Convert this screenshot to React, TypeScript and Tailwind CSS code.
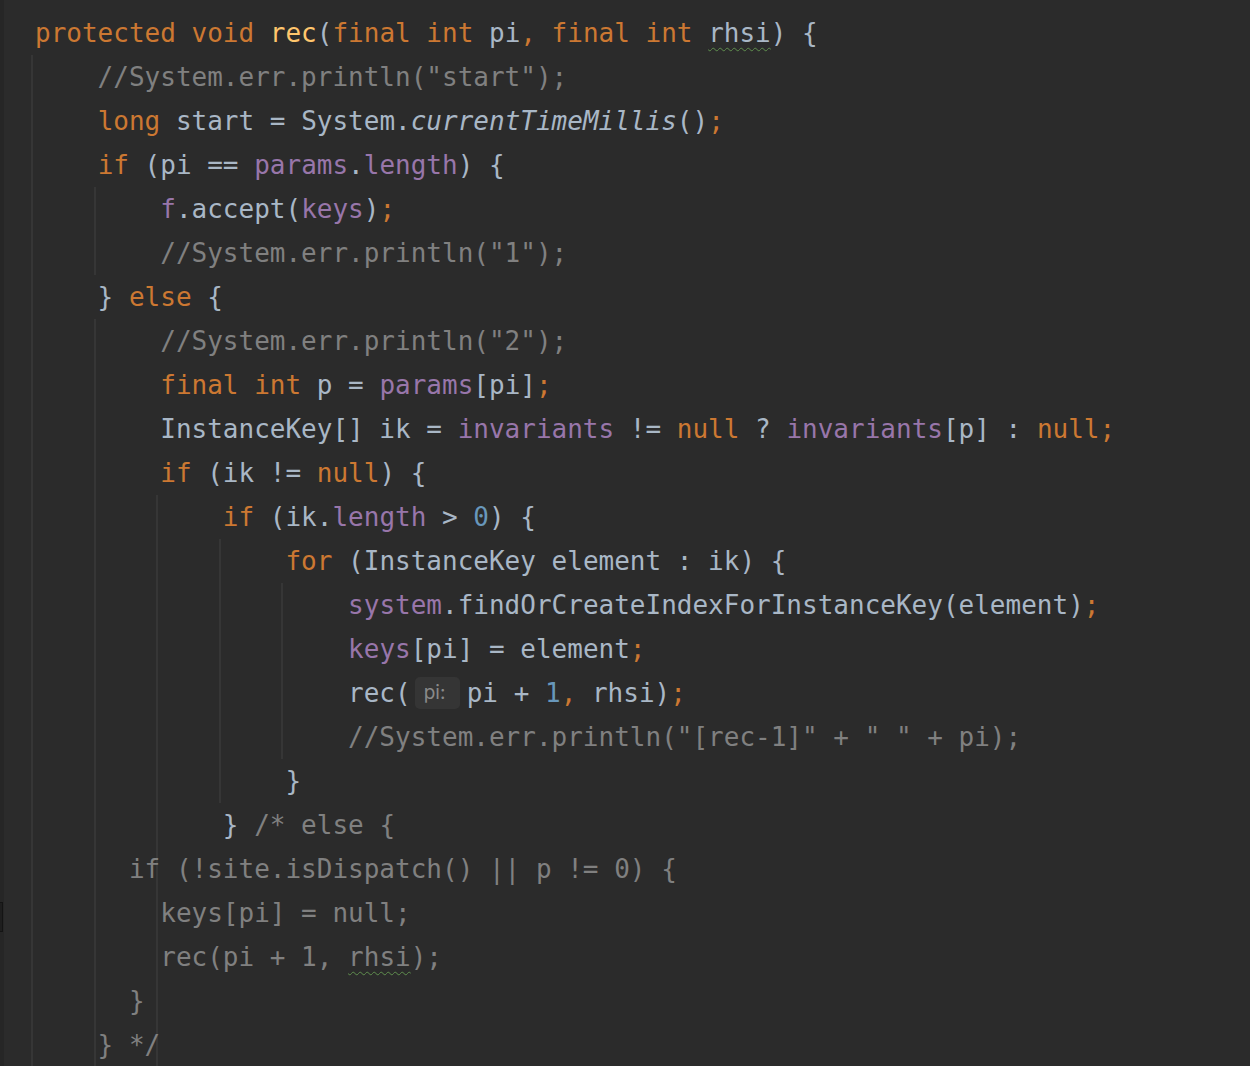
import type { ReactNode } from 'react';

const K = 'text-[#cc7832]';
const T = 'text-[#a9b7c6]';
const F = 'text-[#9876aa]';
const C = 'text-[#808080]';
const N = 'text-[#6897bb]';
const M = 'text-[#ffc66d]';
const I = 'text-[#a9b7c6] italic';
const W = 'text-[#a9b7c6] underline decoration-wavy decoration-[#5f8e4e] underline-offset-[5px] decoration-1';
const WC = 'text-[#808080] underline decoration-wavy decoration-[#5f8e4e] underline-offset-[5px] decoration-1';

type Seg = [string, string] | 'hint';

type Line = { guides: number[]; segs: Seg[] };

function InlayHint() {
  return (
    <span className="inline-block align-middle ml-[4px] mr-[7px] w-[45px] h-[32px] -mt-[4px] rounded-[5px] bg-[#353535] pl-[9px] font-['Inter',sans-serif] text-[19px] leading-[32px] text-[#8a8a8a]">
      pi:
    </span>
  );
}

const lines: Line[] = [
  {
    guides: [],
    segs: [
      ['protected void ', K],
      ['rec', M],
      ['(', T],
      ['final int ', K],
      ['pi', T],
      [', ', K],
      ['final int ', K],
      ['rhsi', W],
      [') {', T],
    ],
  },
  { guides: [0], segs: [['    //System.err.println("start");', C]] },
  {
    guides: [0],
    segs: [
      ['    ', T],
      ['long ', K],
      ['start = System.', T],
      ['currentTimeMillis', I],
      ['()', T],
      [';', K],
    ],
  },
  {
    guides: [0],
    segs: [
      ['    ', T],
      ['if', K],
      [' (pi == ', T],
      ['params', F],
      ['.', T],
      ['length', F],
      [') {', T],
    ],
  },
  {
    guides: [0, 4],
    segs: [
      ['        ', T],
      ['f', F],
      ['.accept(', T],
      ['keys', F],
      [')', T],
      [';', K],
    ],
  },
  { guides: [0, 4], segs: [['        //System.err.println("1");', C]] },
  {
    guides: [0],
    segs: [
      ['    } ', T],
      ['else', K],
      [' {', T],
    ],
  },
  { guides: [0, 4], segs: [['        //System.err.println("2");', C]] },
  {
    guides: [0, 4],
    segs: [
      ['        ', T],
      ['final int ', K],
      ['p = ', T],
      ['params', F],
      ['[pi]', T],
      [';', K],
    ],
  },
  {
    guides: [0, 4],
    segs: [
      ['        InstanceKey[] ik = ', T],
      ['invariants', F],
      [' != ', T],
      ['null', K],
      [' ? ', T],
      ['invariants', F],
      ['[p] : ', T],
      ['null;', K],
    ],
  },
  {
    guides: [0, 4],
    segs: [
      ['        ', T],
      ['if', K],
      [' (ik != ', T],
      ['null', K],
      [') {', T],
    ],
  },
  {
    guides: [0, 4, 8],
    segs: [
      ['            ', T],
      ['if', K],
      [' (ik.', T],
      ['length', F],
      [' > ', T],
      ['0', N],
      [') {', T],
    ],
  },
  {
    guides: [0, 4, 8, 12],
    segs: [
      ['                ', T],
      ['for', K],
      [' (InstanceKey element : ik) {', T],
    ],
  },
  {
    guides: [0, 4, 8, 12, 16],
    segs: [
      ['                    ', T],
      ['system', F],
      ['.findOrCreateIndexForInstanceKey(element)', T],
      [';', K],
    ],
  },
  {
    guides: [0, 4, 8, 12, 16],
    segs: [
      ['                    ', T],
      ['keys', F],
      ['[pi] = element', T],
      [';', K],
    ],
  },
  {
    guides: [0, 4, 8, 12, 16],
    segs: [
      ['                    rec(', T],
      'hint',
      ['pi + ', T],
      ['1', N],
      [', ', K],
      ['rhsi)', T],
      [';', K],
    ],
  },
  {
    guides: [0, 4, 8, 12, 16],
    segs: [['                    //System.err.println("[rec-1]" + " " + pi);', C]],
  },
  { guides: [0, 4, 8, 12], segs: [['                }', T]] },
  {
    guides: [0, 4, 8],
    segs: [
      ['            } ', T],
      ['/* else {', C],
    ],
  },
  { guides: [0, 4, 8], segs: [['      if (!site.isDispatch() || p != 0) {', C]] },
  { guides: [0, 4, 8], segs: [['        keys[pi] = null;', C]] },
  {
    guides: [0, 4, 8],
    segs: [
      ['        rec(pi + 1, ', C],
      ['rhsi', WC],
      [');', C],
    ],
  },
  { guides: [0, 4, 8], segs: [['      }', C]] },
  { guides: [0, 4, 8], segs: [['    } */', C]] },
];

// indent guide offsets, relative to the start of the code column
const guideLeft: Record<number, string> = {
  0: 'left-[-4px]',
  4: 'left-[58.5px]',
  8: 'left-[121px]',
  12: 'left-[183.5px]',
  16: 'left-[246px]',
};

function CodeLine({ line }: { line: Line }) {
  const parts: ReactNode[] = line.segs.map((s, i) =>
    s === 'hint' ? (
      <InlayHint key={i} />
    ) : (
      <span key={i} className={s[1]}>
        {s[0]}
      </span>
    ),
  );
  return (
    <div className="relative h-[44px] whitespace-pre">
      {line.guides.map((g) => (
        <div key={g} className={`absolute top-0 h-full w-[2px] bg-[#363636] ${guideLeft[g]}`} />
      ))}
      <span className="relative">{parts}</span>
    </div>
  );
}

export default function App() {
  return (
    <div className="flex h-[1066px] w-full overflow-hidden bg-[#2b2b2b]">
      <div className="flex w-[4px] shrink-0 flex-col bg-[#262626]">
        <div className="h-[902px]" />
        <div className="h-[30px] w-[3px] border-y border-r border-[#141414] bg-[#1e1e1e]" />
      </div>
      <div className="flex-1 pl-[31px] pt-[11px] font-['DejaVu_Sans_Mono',monospace] text-[26px] leading-[44px] text-[#a9b7c6]">
        {lines.map((line, i) => (
          <CodeLine key={i} line={line} />
        ))}
      </div>
    </div>
  );
}
